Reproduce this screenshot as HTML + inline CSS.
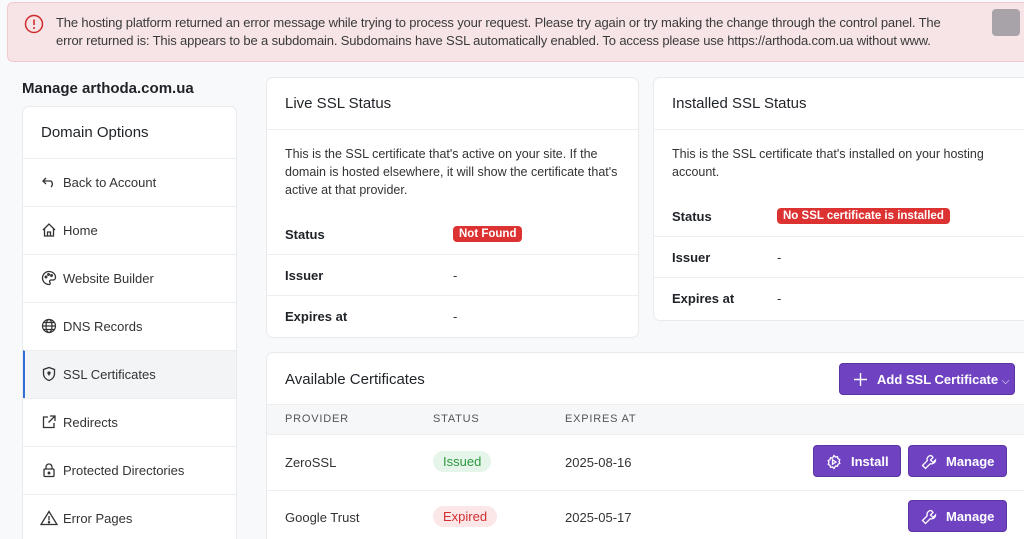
<!DOCTYPE html>
<html><head><meta charset="utf-8"><style>
*{box-sizing:border-box;margin:0;padding:0}
html,body{width:1024px;height:539px;overflow:hidden}
body{background:#f8f9fb;font-family:"Liberation Sans",sans-serif;color:#212529;position:relative}
.abs{position:absolute}
.alert{left:7px;top:2px;width:1030px;height:60px;background:#f6e4e6;border:1px solid #f1c9cd;border-radius:6px}
.alert p{position:absolute;left:48px;top:11px;font-size:13px;line-height:18px;color:#3a3a3a;width:940px;letter-spacing:-0.15px;white-space:nowrap}
.close{left:992px;top:9px;width:28px;height:27px;background:#a8a3a8;border-radius:4px}
.card{position:absolute;background:#fff;border:1px solid #e8eaed;border-radius:7px;overflow:hidden}
.h{font-size:15px;color:#1f2328}
.side .row{position:absolute;left:0;width:213px;height:48px;border-top:1px solid #eceef0;font-size:13px;color:#333}
.side .row span{position:absolute;left:40px;top:16px}
.side .row svg{position:absolute;left:18px;top:15px}
.lbl{position:absolute;font-size:13px;font-weight:bold;color:#1f2328}
.val{position:absolute;font-size:13px;color:#333}
.line{position:absolute;left:0;right:0;height:1px;background:#eceef0}
.badge{position:absolute;background:#dc3232;color:#fff;font-size:11.5px;font-weight:bold;padding:2px 6px;border-radius:4px}
.btn{position:absolute;background:#6f42c1;border:1px solid #5c35a5;border-radius:4px;color:#fff;font-size:13px;font-weight:bold;height:32px}
.btn span{position:absolute;top:8px}
.btn svg{position:absolute}
.pill{position:absolute;font-size:13px;padding:3px 10px;border-radius:11px}
</style></head><body>
<div class="abs alert"><svg class="abs" style="left:16px;top:11px" width="20" height="20" viewBox="0 0 20 20"><circle cx="10" cy="10" r="8.5" fill="none" stroke="#d02b2b" stroke-width="1.5"/><path d="M10 5.5v5.5" stroke="#d02b2b" stroke-width="1.6"/><circle cx="10" cy="14" r="1" fill="#d02b2b"/></svg>
<p>The hosting platform returned an error message while trying to process your request. Please try again or try making the change through the control panel. The<br>error returned is: This appears to be a subdomain. Subdomains have SSL automatically enabled. To access please use https://arthoda.com.ua without www.</p></div>
<div class="abs close"></div>
<div class="abs" style="left:22px;top:80px;font-size:15px;font-weight:bold;color:#1f2328">Manage arthoda.com.ua</div>

<div class="card side" style="left:22px;top:106px;width:215px;height:450px">
<div class="abs h" style="left:18px;top:17px">Domain Options</div>
<div class="row" style="top:51px"><svg width="16" height="16" viewBox="0 0 16 16" fill="none" stroke="#333" stroke-width="1.3"><path d="M5 4L2 7l3 3M2 7h8a4 4 0 0 1 0 6"/></svg><span>Back to Account</span></div>
<div class="row" style="top:99px"><svg width="16" height="16" viewBox="0 0 16 16" fill="none" stroke="#333" stroke-width="1.3"><path d="M2 8L8 2l6 6M3.5 6.5V14h9V6.5M6.5 14V10h3v4"/></svg><span>Home</span></div>
<div class="row" style="top:147px"><svg width="16" height="16" viewBox="0 0 16 16" fill="none" stroke="#333" stroke-width="1.3"><path d="M8 1.5a6.5 6.5 0 1 0 0 13c1.5 0 1.5-1.5.8-2.3-.7-.9 0-2.2 1.2-2.2H12a2.5 2.5 0 0 0 2.5-2.5C14.5 4 11.6 1.5 8 1.5z"/><circle cx="5" cy="7" r=".8"/><circle cx="7.5" cy="4.5" r=".8"/><circle cx="10.5" cy="5.5" r=".8"/></svg><span>Website Builder</span></div>
<div class="row" style="top:195px"><svg width="16" height="16" viewBox="0 0 16 16" fill="none" stroke="#333" stroke-width="1.2"><circle cx="8" cy="8" r="6.5"/><ellipse cx="8" cy="8" rx="3" ry="6.5"/><path d="M1.5 8h13M2.5 4.5h11M2.5 11.5h11"/></svg><span>DNS Records</span></div>
<div class="row" style="top:243px;background:#f3f4f6;border-left:2px solid #2f6fd6"><svg width="16" height="16" viewBox="0 0 16 16" fill="none" stroke="#333" stroke-width="1.3" style="left:16px"><path d="M8 1.5l5.5 2v4c0 3.5-2.5 6-5.5 7-3-1-5.5-3.5-5.5-7v-4z"/><circle cx="8" cy="7" r="1" fill="#333"/><path d="M8 7.5v2"/></svg><span style="left:38px">SSL Certificates</span></div>
<div class="row" style="top:291px"><svg width="16" height="16" viewBox="0 0 16 16" fill="none" stroke="#333" stroke-width="1.3"><path d="M7 3H2.5v10.5H13V9M9 2h5v5M14 2L7.5 8.5"/></svg><span>Redirects</span></div>
<div class="row" style="top:339px"><svg width="16" height="16" viewBox="0 0 16 16" fill="none" stroke="#333" stroke-width="1.3"><rect x="3" y="7" width="10" height="7.5" rx="1"/><path d="M5 7V5a3 3 0 0 1 6 0v2"/><circle cx="8" cy="11" r=".8" fill="#333"/></svg><span>Protected Directories</span></div>
<div class="row" style="top:387px"><svg width="18" height="16" viewBox="0 0 18 16" fill="none" stroke="#333" stroke-width="1.3" style="left:17px"><path d="M9 1.5L1 14.5h16z M9 6v4.5"/><circle cx="9" cy="12.3" r=".6" fill="#333"/></svg><span>Error Pages</span></div>
</div>

<div class="card" style="left:266px;top:77px;width:373px;height:261px">
<div class="abs h" style="left:18px;top:17px">Live SSL Status</div>
<div class="line" style="top:51px"></div>
<div class="val" style="left:18px;top:67px;width:340px;line-height:18px;font-size:12.5px">This is the SSL certificate that's active on your site. If the domain is hosted elsewhere, it will show the certificate that's active at that provider.</div>
<div class="lbl" style="left:18px;top:149px">Status</div><div class="badge" style="left:186px;top:148px">Not Found</div>
<div class="line" style="top:176px"></div>
<div class="lbl" style="left:18px;top:190px">Issuer</div><div class="val" style="left:186px;top:190px">-</div>
<div class="line" style="top:217px"></div>
<div class="lbl" style="left:18px;top:231px">Expires at</div><div class="val" style="left:186px;top:231px">-</div>
</div>

<div class="card" style="left:653px;top:77px;width:380px;height:244px">
<div class="abs h" style="left:18px;top:17px">Installed SSL Status</div>
<div class="line" style="top:51px"></div>
<div class="val" style="left:18px;top:67px;width:340px;line-height:18px;font-size:12.5px">This is the SSL certificate that's installed on your hosting account.</div>
<div class="lbl" style="left:18px;top:131px">Status</div><div class="badge" style="left:123px;top:130px">No SSL certificate is installed</div>
<div class="line" style="top:158px"></div>
<div class="lbl" style="left:18px;top:172px">Issuer</div><div class="val" style="left:123px;top:172px">-</div>
<div class="line" style="top:199px"></div>
<div class="lbl" style="left:18px;top:213px">Expires at</div><div class="val" style="left:123px;top:213px">-</div>
</div>

<div class="card" style="left:266px;top:352px;width:770px;height:220px">
<div class="abs h" style="left:18px;top:18px">Available Certificates</div>
<div class="btn" style="left:572px;top:10px;width:176px"><svg style="left:13px;top:8px" width="15" height="15" viewBox="0 0 15 15" stroke="#fff" stroke-width="1.4"><path d="M7.5 1v13M1 7.5h13"/></svg><span style="left:37px">Add SSL Certificate <span style="position:static;font-weight:normal;font-size:10px">⌵</span></span></div>
<div class="abs" style="left:0;top:51px;right:0;height:31px;background:#f6f7f9;border-top:1px solid #eceef0;border-bottom:1px solid #eceef0"></div>
<div class="val" style="left:18px;top:60px;font-size:11px;letter-spacing:.8px;color:#555">PROVIDER</div>
<div class="val" style="left:166px;top:60px;font-size:11px;letter-spacing:.8px;color:#555">STATUS</div>
<div class="val" style="left:298px;top:60px;font-size:11px;letter-spacing:.8px;color:#555">EXPIRES AT</div>
<div class="val" style="left:18px;top:102px">ZeroSSL</div>
<div class="pill" style="left:166px;top:98px;background:#e6f5ea;color:#2a9a3e">Issued</div>
<div class="val" style="left:298px;top:102px">2025-08-16</div>
<div class="btn" style="left:546px;top:92px;width:88px"><svg style="left:12px;top:8px" width="16" height="16" viewBox="0 0 16 16" fill="none" stroke="#fff" stroke-width="1.3"><path d="M8 1.5l1.5 1.5 2-.3.5 2 1.8 1-.8 1.8.8 1.8-1.8 1-.5 2-2-.3L8 14.5 6.5 13l-2 .3-.5-2-1.8-1L3 8.5 2.2 6.7l1.8-1 .5-2 2 .3z"/><path d="M6.5 5.8v4.4L10 8z"/></svg><span style="left:37px">Install</span></div>
<div class="btn" style="left:641px;top:92px;width:99px"><svg style="left:12px;top:8px" width="16" height="16" viewBox="0 0 16 16" fill="none" stroke="#fff" stroke-width="1.3"><path d="M10 1.5a4 4 0 0 0-3.8 5.2L1.5 11.5l3 3 4.8-4.8A4 4 0 0 0 14.5 6l-2.5 2.5-2.5-2.5L12 3.5A4 4 0 0 0 10 1.5z"/></svg><span style="left:37px">Manage</span></div>
<div class="line" style="top:137px"></div>
<div class="val" style="left:18px;top:157px">Google Trust</div>
<div class="pill" style="left:166px;top:153px;background:#fbe6e8;color:#d32f2f">Expired</div>
<div class="val" style="left:298px;top:157px">2025-05-17</div>
<div class="btn" style="left:641px;top:147px;width:99px"><svg style="left:12px;top:8px" width="16" height="16" viewBox="0 0 16 16" fill="none" stroke="#fff" stroke-width="1.3"><path d="M10 1.5a4 4 0 0 0-3.8 5.2L1.5 11.5l3 3 4.8-4.8A4 4 0 0 0 14.5 6l-2.5 2.5-2.5-2.5L12 3.5A4 4 0 0 0 10 1.5z"/></svg><span style="left:37px">Manage</span></div>
</div>
</body></html>
